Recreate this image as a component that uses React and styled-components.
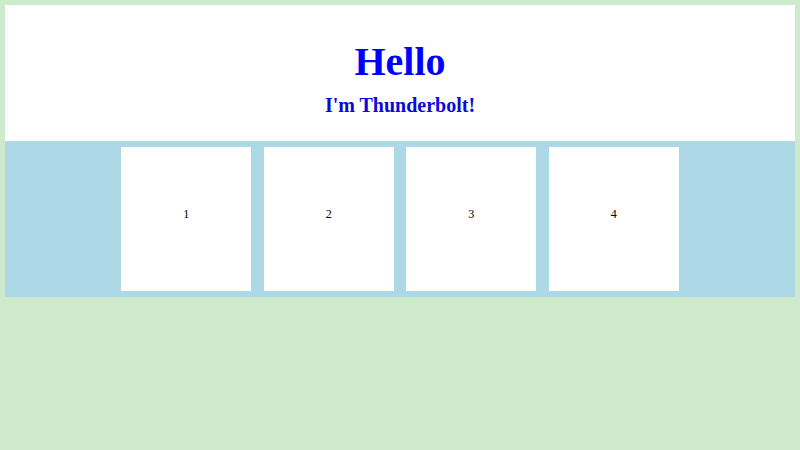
import React from "react";
import styled, { createGlobalStyle } from "styled-components";

const GlobalStyle = createGlobalStyle`
	body {
		margin: 5px;
		background-color: #cdebcc;
		font-family: "Liberation Serif", "Times New Roman", serif;
	}
`;

const Header = styled.header`
	background-color: #ffffff;
	text-align: center;
	padding: 34px 0 24px;
`;

const Title = styled.h1`
	margin: 0;
	font-size: 40px;
	line-height: 46px;
	color: blue;
`;

const Subtitle = styled.h2`
	margin: 8px 0 0;
	font-size: 20px;
	line-height: 24px;
	color: #0a0ad8;
`;

const Strip = styled.section`
	display: flex;
	justify-content: center;
	gap: 12.5px;
	padding: 6px 0;
	background-color: lightblue;
`;

const Card = styled.div`
	box-sizing: border-box;
	display: flex;
	align-items: center;
	justify-content: center;
	width: 130px;
	height: 144px;
	padding-bottom: 10px;
	background-color: #ffffff;
	font-size: 12px;
	color: #000;
`;

const App = () => (
	<>
		<GlobalStyle />
		<Header>
			<Title>Hello</Title>
			<Subtitle>I'm Thunderbolt!</Subtitle>
		</Header>
		<Strip>
			{[1, 2, 3, 4].map((n) => (
				<Card key={n}>{n}</Card>
			))}
		</Strip>
	</>
);

export default App;
